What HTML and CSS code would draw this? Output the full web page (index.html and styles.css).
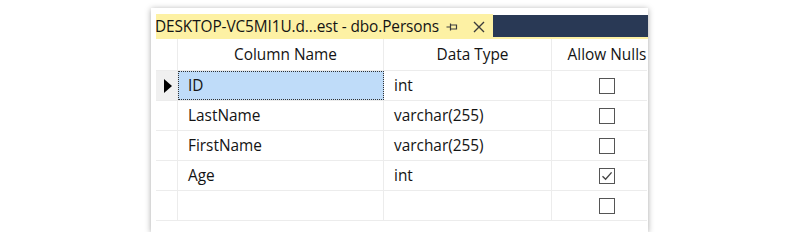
FILE: index.html
```html
<!DOCTYPE html>
<html>
<head>
<meta charset="utf-8">
<link rel="stylesheet" href="styles.css">
</head>
<body>
<div class="card">
  <div class="tabstrip">
    <div class="tab">
      <span class="tab-title">DESKTOP-VC5MI1U.d...est - dbo.Persons</span>
      <svg class="pin" width="12" height="10" viewBox="0 0 12 10"><path d="M0.5 5H4.5M4.5 1.5V8.5M4.5 3H10.5V7H4.5" fill="none" stroke="#3c3c3c" stroke-width="1.2"/></svg>
      <svg class="close" width="12" height="12" viewBox="0 0 12 12"><path d="M1 1L11 11M11 1L1 11" fill="none" stroke="#3c3c3c" stroke-width="1.4"/></svg>
    </div>
    <div class="well"></div>
  </div>
  <div class="grid">
    <div class="row head">
      <div class="c rh"></div>
      <div class="c name">Column Name</div>
      <div class="c type">Data Type</div>
      <div class="c nulls">Allow Nulls</div>
    </div>
    <div class="row">
      <div class="c rh current"><span class="arrow"></span></div>
      <div class="c name sel">ID</div>
      <div class="c type">int</div>
      <div class="c nulls"><span class="cb"></span></div>
    </div>
    <div class="row">
      <div class="c rh"></div>
      <div class="c name">LastName</div>
      <div class="c type">varchar(255)</div>
      <div class="c nulls"><span class="cb"></span></div>
    </div>
    <div class="row">
      <div class="c rh"></div>
      <div class="c name">FirstName</div>
      <div class="c type">varchar(255)</div>
      <div class="c nulls"><span class="cb"></span></div>
    </div>
    <div class="row">
      <div class="c rh"></div>
      <div class="c name">Age</div>
      <div class="c type">int</div>
      <div class="c nulls"><span class="cb"><svg width="14" height="14" viewBox="0 0 14 14"><path d="M2.5 7.2L5.6 10.2L11.6 3.4" fill="none" stroke="#444" stroke-width="1.4"/></svg></span></div>
    </div>
    <div class="row">
      <div class="c rh"></div>
      <div class="c name"></div>
      <div class="c type"></div>
      <div class="c nulls"><span class="cb"></span></div>
    </div>
  </div>
</div>
</body>
</html>
```
FILE: styles.css
```css
html, body {
  margin: 0;
  padding: 0;
  background: #ffffff;
}
body {
  font-family: "Open Sans", "Noto Sans", sans-serif;
  color: #141414;
}
.card {
  margin: 8px 0 0 151px;
  width: 497px;
  height: 224px;
  box-sizing: border-box;
  padding: 6px 0 0 5px;
  background: #fff;
  box-shadow: 0 1px 6px rgba(0, 0, 0, 0.35);
}
.tabstrip {
  display: flex;
  height: 25px;
}
.tab {
  width: 337px;
  background: #fdf1a4;
  display: flex;
  align-items: center;
  font-size: 15.4px;
  letter-spacing: -0.1px;
  white-space: nowrap;
  overflow: hidden;
}
.tab-title {
  margin-left: -1px;
  color: #141414;
}
.pin {
  margin-left: 7px;
  flex: none;
}
.close {
  margin-left: 15px;
  flex: none;
}
.well {
  flex: 1;
  background: #293955;
  border-top: 1px solid #fff;
  border-bottom: 2px solid #fdf1a4;
}
.grid {
  width: 491px;
  overflow: hidden;
}
.row {
  display: flex;
  height: 30px;
  box-sizing: border-box;
  border-bottom: 1px solid #ececec;
  width: 501px;
}
.row.head {
  height: 32px;
}
.c {
  flex: none;
  box-sizing: border-box;
  display: flex;
  align-items: center;
  border-right: 1px solid #ececec;
  font-size: 15.4px;
  white-space: nowrap;
}
.head .c {
  justify-content: center;
}
.rh {
  width: 22px;
  justify-content: center;
}
.rh.current {
  background: #f0f0f0;
}
.arrow {
  width: 0;
  height: 0;
  border-top: 7px solid transparent;
  border-bottom: 7px solid transparent;
  border-left: 8px solid #000;
  margin-left: 2px;
}
.name {
  width: 206px;
  padding-left: 10px;
}
.name.sel {
  background: #bfdcf9;
  border: 1px dotted #333;
  padding-left: 9px;
}
.type {
  width: 168px;
  padding-left: 10px;
}
.nulls {
  width: 110px;
  justify-content: center;
  border-right: none;
}
.cb {
  width: 16px;
  height: 16px;
  box-sizing: border-box;
  border: 1.5px solid #555;
  display: flex;
  align-items: center;
  justify-content: center;
}
.cb svg {
  display: block;
}
```
